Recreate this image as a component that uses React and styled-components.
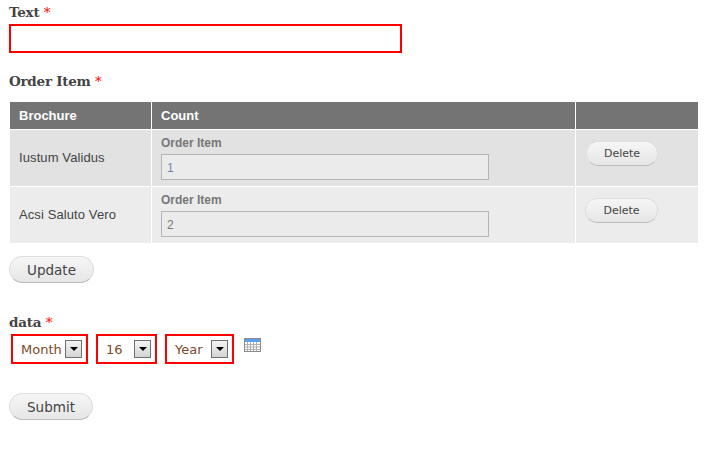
import React from "react";
import styled, { createGlobalStyle } from "styled-components";

const Global = createGlobalStyle`
  html, body { margin: 0; padding: 0; background: #fff; }
  body { font-family: "Liberation Sans", Arial, sans-serif; }
`;

const Page = styled.div`
  width: 709px;
  height: 456px;
  box-sizing: border-box;
  padding: 4px 9px 0;
  overflow: hidden;
`;

const Label = styled.div`
  font-family: "DejaVu Serif", serif;
  font-weight: 700;
  font-size: 13.5px;
  line-height: 17px;
  letter-spacing: -0.25px;
  color: #444;
`;

const Star = styled.span`
  color: #f00;
  font-weight: 400;
`;

const TextBox = styled.div`
  width: 393px;
  height: 29px;
  box-sizing: border-box;
  border: 2px solid #f00;
  margin-top: 3px;
  background: #fff;
`;

const OrderLabel = styled(Label)`
  margin-top: 20px;
`;

const Table = styled.div`
  width: 688px;
  margin: 12px 0 0 1px;
  display: grid;
  grid-template-columns: 141px 423px 122px;
  column-gap: 1px;
  row-gap: 1px;
  color: #444;
`;

const Head = styled.div`
  height: 27px;
  background: #747474;
  color: #fff;
  font-weight: 700;
  font-size: 13px;
  line-height: 27px;
  padding-left: 9px;
`;

const Cell = styled.div`
  background: ${(p) => (p.$alt ? "#ececec" : "#e2e2e2")};
  height: 56px;
  box-sizing: border-box;
  padding-left: 9px;
  display: flex;
  flex-direction: column;
  align-items: flex-start;
  justify-content: ${(p) => (p.$center ? "center" : "flex-start")};
`;

const RowTitle = styled.span`
  font-size: 13px;
  letter-spacing: 0.1px;
  color: #444;
  margin-top: -2px;
`;

const FieldTitle = styled.div`
  font-size: 12px;
  font-weight: 700;
  line-height: 14px;
  color: #777;
  margin-top: 6px;
`;

const CountInput = styled.div`
  width: 328px;
  height: 26px;
  box-sizing: border-box;
  border: 1px solid #b4b4b4;
  background: #ebebeb;
  margin-top: 4px;
  padding-left: 5px;
  font-size: 12px;
  line-height: 26px;
  color: ${(p) => p.$color};
`;

const Btn = styled.div`
  display: flex;
  align-items: center;
  justify-content: center;
  box-sizing: border-box;
  width: ${(p) => p.$w}px;
  height: ${(p) => p.$h}px;
  border: 1px solid #dedede;
  border-bottom-color: #bbb;
  border-radius: 14px;
  background: linear-gradient(#f6f6f6, #e6e6e6);
  font-family: "DejaVu Sans", sans-serif;
  font-size: ${(p) => p.$size}px;
  color: #444;
`;

const DeleteBtn = styled(Btn)`
  margin: 11px 0 0 ${(p) => (p.$second ? 0 : 1)}px;
`;

const UpdateBtn = styled(Btn)`
  margin-top: 13px;
`;

const DataLabel = styled(Label)`
  margin-top: 31px;
`;

const DateRow = styled.div`
  display: flex;
  align-items: flex-start;
  margin: 3px 0 0 2px;
`;

const SelectBox = styled.div`
  width: ${(p) => p.$w}px;
  height: 30px;
  box-sizing: border-box;
  border: 2px solid #f00;
  margin-right: 8px;
  display: flex;
  align-items: center;
  justify-content: space-between;
  padding: 0 4px 0 8px;
  font-family: "DejaVu Sans", sans-serif;
  font-size: 13px;
  color: #7a4a2a;
`;

const Arrow = styled.div`
  width: 17px;
  height: 18px;
  box-sizing: border-box;
  border: 1px solid #707070;
  background: linear-gradient(#f4f4f4, #d4d4d4);
  display: flex;
  align-items: center;
  justify-content: center;
  &::after {
    content: "";
    border-left: 4px solid transparent;
    border-right: 4px solid transparent;
    border-top: 4px solid #000;
  }
`;

const CalIcon = styled.svg`
  width: 17px;
  height: 14px;
  margin: 4px 0 0 2px;
`;

const SubmitBtn = styled(Btn)`
  margin-top: 29px;
`;

const Calendar = () => (
  <CalIcon viewBox="0 0 17 14">
    <rect x="0.5" y="0.5" width="16" height="13" fill="#fff" stroke="#8a8a8a" />
    <rect x="1" y="1" width="15" height="3" fill="#5aa0ea" />
    <path d="M1 6.5H16M1 9H16M1 11.5H16M3.5 4V13M6.5 4V13M9.5 4V13M12.5 4V13" stroke="#b0b0b0" fill="none" />
  </CalIcon>
);

export default function App() {
  return (
    <Page>
      <Global />
      <Label>Text <Star>*</Star></Label>
      <TextBox />
      <OrderLabel>Order Item <Star>*</Star></OrderLabel>
      <Table>
        <Head>Brochure</Head>
        <Head>Count</Head>
        <Head />
        <Cell $center><RowTitle>Iustum Validus</RowTitle></Cell>
        <Cell>
          <FieldTitle>Order Item</FieldTitle>
          <CountInput $color="#6f88a8">1</CountInput>
        </Cell>
        <Cell><DeleteBtn $w={72} $h={25} $size={11}>Delete</DeleteBtn></Cell>
        <Cell $alt $center><RowTitle>Acsi Saluto Vero</RowTitle></Cell>
        <Cell $alt>
          <FieldTitle>Order Item</FieldTitle>
          <CountInput $color="#777">2</CountInput>
        </Cell>
        <Cell $alt><DeleteBtn $second $w={73} $h={25} $size={11}>Delete</DeleteBtn></Cell>
      </Table>
      <UpdateBtn $w={85} $h={27} $size={13.5}>Update</UpdateBtn>
      <DataLabel>data <Star>*</Star></DataLabel>
      <DateRow>
        <SelectBox $w={77}>Month<Arrow /></SelectBox>
        <SelectBox $w={61}>16<Arrow /></SelectBox>
        <SelectBox $w={69}>Year<Arrow /></SelectBox>
        <Calendar />
      </DateRow>
      <SubmitBtn $w={84} $h={27} $size={13.5}>Submit</SubmitBtn>
    </Page>
  );
}
